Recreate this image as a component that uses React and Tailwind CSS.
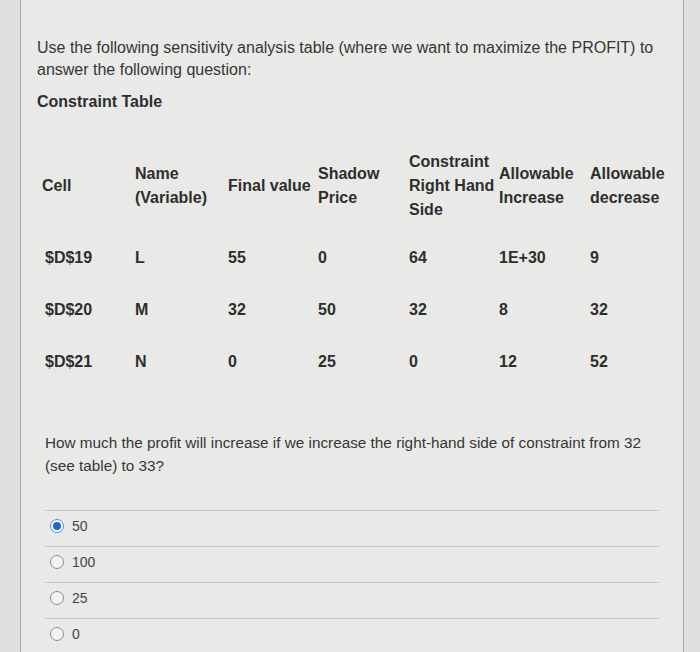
import React from 'react';

const headers = [
  ['Cell'],
  ['Name', '(Variable)'],
  ['Final value'],
  ['Shadow', 'Price'],
  ['Constraint', 'Right Hand', 'Side'],
  ['Allowable', 'Increase'],
  ['Allowable', 'decrease'],
];

const rows = [
  ['$D$19', 'L', '55', '0', '64', '1E+30', '9'],
  ['$D$20', 'M', '32', '50', '32', '8', '32'],
  ['$D$21', 'N', '0', '25', '0', '12', '52'],
];

const options = ['50', '100', '25', '0'];

function Radio({ checked }) {
  if (checked) {
    return (
      <span className="flex h-[14px] w-[14px] items-center justify-center rounded-full border border-[#4b8de6] bg-white">
        <span className="h-[8px] w-[8px] rounded-full bg-[#1f66d6]" />
      </span>
    );
  }
  return <span className="h-[14px] w-[14px] rounded-full border border-[#8a8b8a] bg-[#f3f4f2]" />;
}

function App() {
  const cols = 'grid grid-cols-[93px_93px_90px_91px_90px_91px_1fr]';

  return (
    <div className="min-h-screen bg-[#dfe0de] font-['Liberation_Sans',Arial,sans-serif] text-[#363636]">
      <div className="ml-[20px] mr-[16px] min-h-[652px] border-x border-[#a5a6a4] bg-[#e9eae8] pl-[16px] pt-[37px]">
        <p className="text-[16px] leading-[22px]">
          Use the following sensitivity analysis table (where we want to maximize the PROFIT) to
          <br />
          answer the following question:
        </p>
        <h3 className="mt-[10px] text-[16px] font-bold leading-[22px] text-[#2e2e2e]">Constraint Table</h3>

        <div className="ml-[5px] mt-[37px] text-[16px] font-bold text-[#2e2e2e]">
          <div className={`${cols} h-[72px] items-center leading-[24px]`}>
            {headers.map((lines, i) => (
              <div key={i}>
                {lines.map((l) => (
                  <div key={l}>{l}</div>
                ))}
              </div>
            ))}
          </div>
          <div className="mt-[10px]">
            {rows.map((r) => (
              <div key={r[0]} className={`${cols} h-[52px] items-center leading-[20px]`}>
                {r.map((v, i) => (
                  <div key={i} className={i === 0 ? 'pl-[3px]' : ''}>
                    {v}
                  </div>
                ))}
              </div>
            ))}
          </div>
        </div>

        <p className="ml-[8px] mt-[43px] text-[15.3px] leading-[23px]">
          How much the profit will increase if we increase the right-hand side of constraint from 32
          <br />
          (see table) to 33?
        </p>

        <div className="ml-[8px] mr-[24px] mt-[33px]">
          {options.map((o, i) => (
            <div key={o} className="flex items-center gap-[8px] border-t border-[#c6c7c5] pb-[12px] pl-[5px] pt-[7px] text-[14px] leading-[16px] text-[#444]">
              <Radio checked={i === 0} />
              <span>{o}</span>
            </div>
          ))}
        </div>
      </div>
    </div>
  );
}

export default App;
